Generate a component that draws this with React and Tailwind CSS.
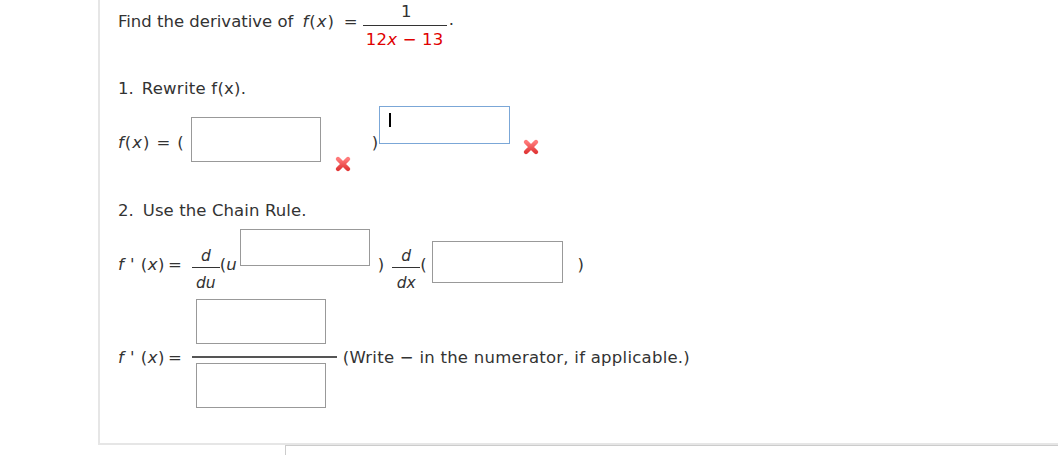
import React from "react";

const font = { fontFamily: '"DejaVu Sans", Verdana, sans-serif' };

function RedX() {
  return (
    <svg width="18" height="18" viewBox="0 0 18 18">
      <defs>
        <linearGradient id="rx" x1="0" y1="0" x2="0" y2="1">
          <stop offset="0" stopColor="#ff7a7a" />
          <stop offset="1" stopColor="#e23a3a" />
        </linearGradient>
      </defs>
      <path d="M4 4 L14 14 M14 4 L4 14" stroke="url(#rx)" strokeWidth="4.4" strokeLinecap="round" fill="none" />
    </svg>
  );
}

function Box({ className = "" }) {
  return <div className={"border border-[#999] bg-white shrink-0 " + className} />;
}

function DFrac({ den }) {
  return (
    <div className="flex flex-col items-center w-[28px] mt-[18px] shrink-0 text-[15.5px]">
      <span className="leading-[18px] italic">d</span>
      <div className="w-full h-px bg-[#333] mt-[2px]" />
      <span className="leading-[18px] italic mt-[6px]">{den}</span>
    </div>
  );
}

function FPrime({ mt }) {
  return (
    <>
      <span className={"leading-[20px] whitespace-pre tracking-[0.5px] " + mt}>
        <i>f</i> ' (<i>x</i>)
      </span>
      <span className={"leading-[20px] ml-[3px] " + mt}>=</span>
    </>
  );
}

export default function App() {
  return (
    <div className="w-[1058px] h-[455px] bg-white overflow-hidden flex flex-col text-[#333] text-[16.5px]" style={font}>
      <div className="ml-[98px] h-[445px] shrink-0 border-l-2 border-b-2 border-[#e6e6e6] pl-[18px] flex flex-col">
        {/* Title */}
        <div className="flex items-start h-[52px]">
          <span className="leading-[20px] mt-[12px] whitespace-pre">Find the derivative of</span>
          <span className="leading-[20px] mt-[12px] ml-[9px] tracking-[1px]">
            <i>f</i>(<i>x</i>)
          </span>
          <span className="leading-[20px] mt-[12px] ml-[9px]">=</span>
          <div className="flex flex-col items-center w-[84px] ml-[5px] mt-[2px]">
            <span className="leading-[20px] ml-[3px]">1</span>
            <div className="w-full h-px bg-[#333] mt-[3px]" />
            <span className="leading-[20px] mt-[4px] text-[#e00000] whitespace-pre tracking-[0.2px]">
              12<i>x</i> − 13
            </span>
          </div>
          <span className="leading-[20px] mt-[10px] ml-[2px]">.</span>
        </div>

        <div className="flex leading-[20px] mt-[27px]">
          <span>1.</span>
          <span className="ml-[8px] tracking-[0.25px]">Rewrite f(x).</span>
        </div>

        {/* Row 1 */}
        <div className="flex items-start h-[66px] mt-[7px]">
          <span className="leading-[20px] mt-[27px] tracking-[1px]">
            <i>f</i>(<i>x</i>)
          </span>
          <span className="leading-[20px] mt-[27px] ml-[6px]">=</span>
          <span className="leading-[20px] mt-[27px] ml-[7px]">(</span>
          <Box className="w-[130px] h-[45px] mt-[11px] ml-[7px]" />
          <div className="mt-[49px] ml-[13px]">
            <RedX />
          </div>
          <span className="leading-[20px] mt-[27px] ml-[20px]">)</span>
          <div className="w-[131px] h-[38px] ml-[1px] border border-[#7ba7d7] bg-white shrink-0 flex items-start">
            <div className="w-[2px] h-[14px] bg-black ml-[9px] mt-[6px]" />
          </div>
          <div className="mt-[32px] ml-[12px]">
            <RedX />
          </div>
        </div>

        <div className="flex leading-[20px] mt-[29px]">
          <span>2.</span>
          <span className="ml-[9px] tracking-[0.1px]">Use the Chain Rule.</span>
        </div>

        {/* Row 2 */}
        <div className="flex items-start h-[60px] mt-[8px]">
          <FPrime mt="mt-[26px]" />
          <div className="ml-[10px]">
            <DFrac den="du" />
          </div>
          <span className="leading-[20px] mt-[26px] whitespace-pre">
            (<i>u</i>
          </span>
          <Box className="w-[130px] h-[37px] ml-[3px]" />
          <span className="leading-[20px] mt-[26px] ml-[8px]">)</span>
          <div className="ml-[8px]">
            <DFrac den="dx" />
          </div>
          <span className="leading-[20px] mt-[26px]">(</span>
          <Box className="w-[131px] h-[42px] mt-[12px] ml-[5px]" />
          <span className="leading-[20px] mt-[26px] ml-[15px]">)</span>
        </div>

        {/* Row 3 */}
        <div className="flex items-start h-[110px] mt-[10px]">
          <FPrime mt="mt-[49px]" />
          <div className="flex flex-col items-start w-[145px] ml-[10px] shrink-0">
            <Box className="w-[130px] h-[45px] ml-[4px]" />
            <div className="w-full h-[2px] bg-[#555] mt-[12px]" />
            <Box className="w-[130px] h-[45px] mt-[5px] ml-[4px]" />
          </div>
          <span className="leading-[20px] mt-[49px] ml-[6px] whitespace-pre tracking-[0.25px]">
            (Write − in the numerator, if applicable.)
          </span>
        </div>
      </div>
      <div className="ml-[285px] flex-1 border-l border-t border-[#cccccc]" />
    </div>
  );
}
